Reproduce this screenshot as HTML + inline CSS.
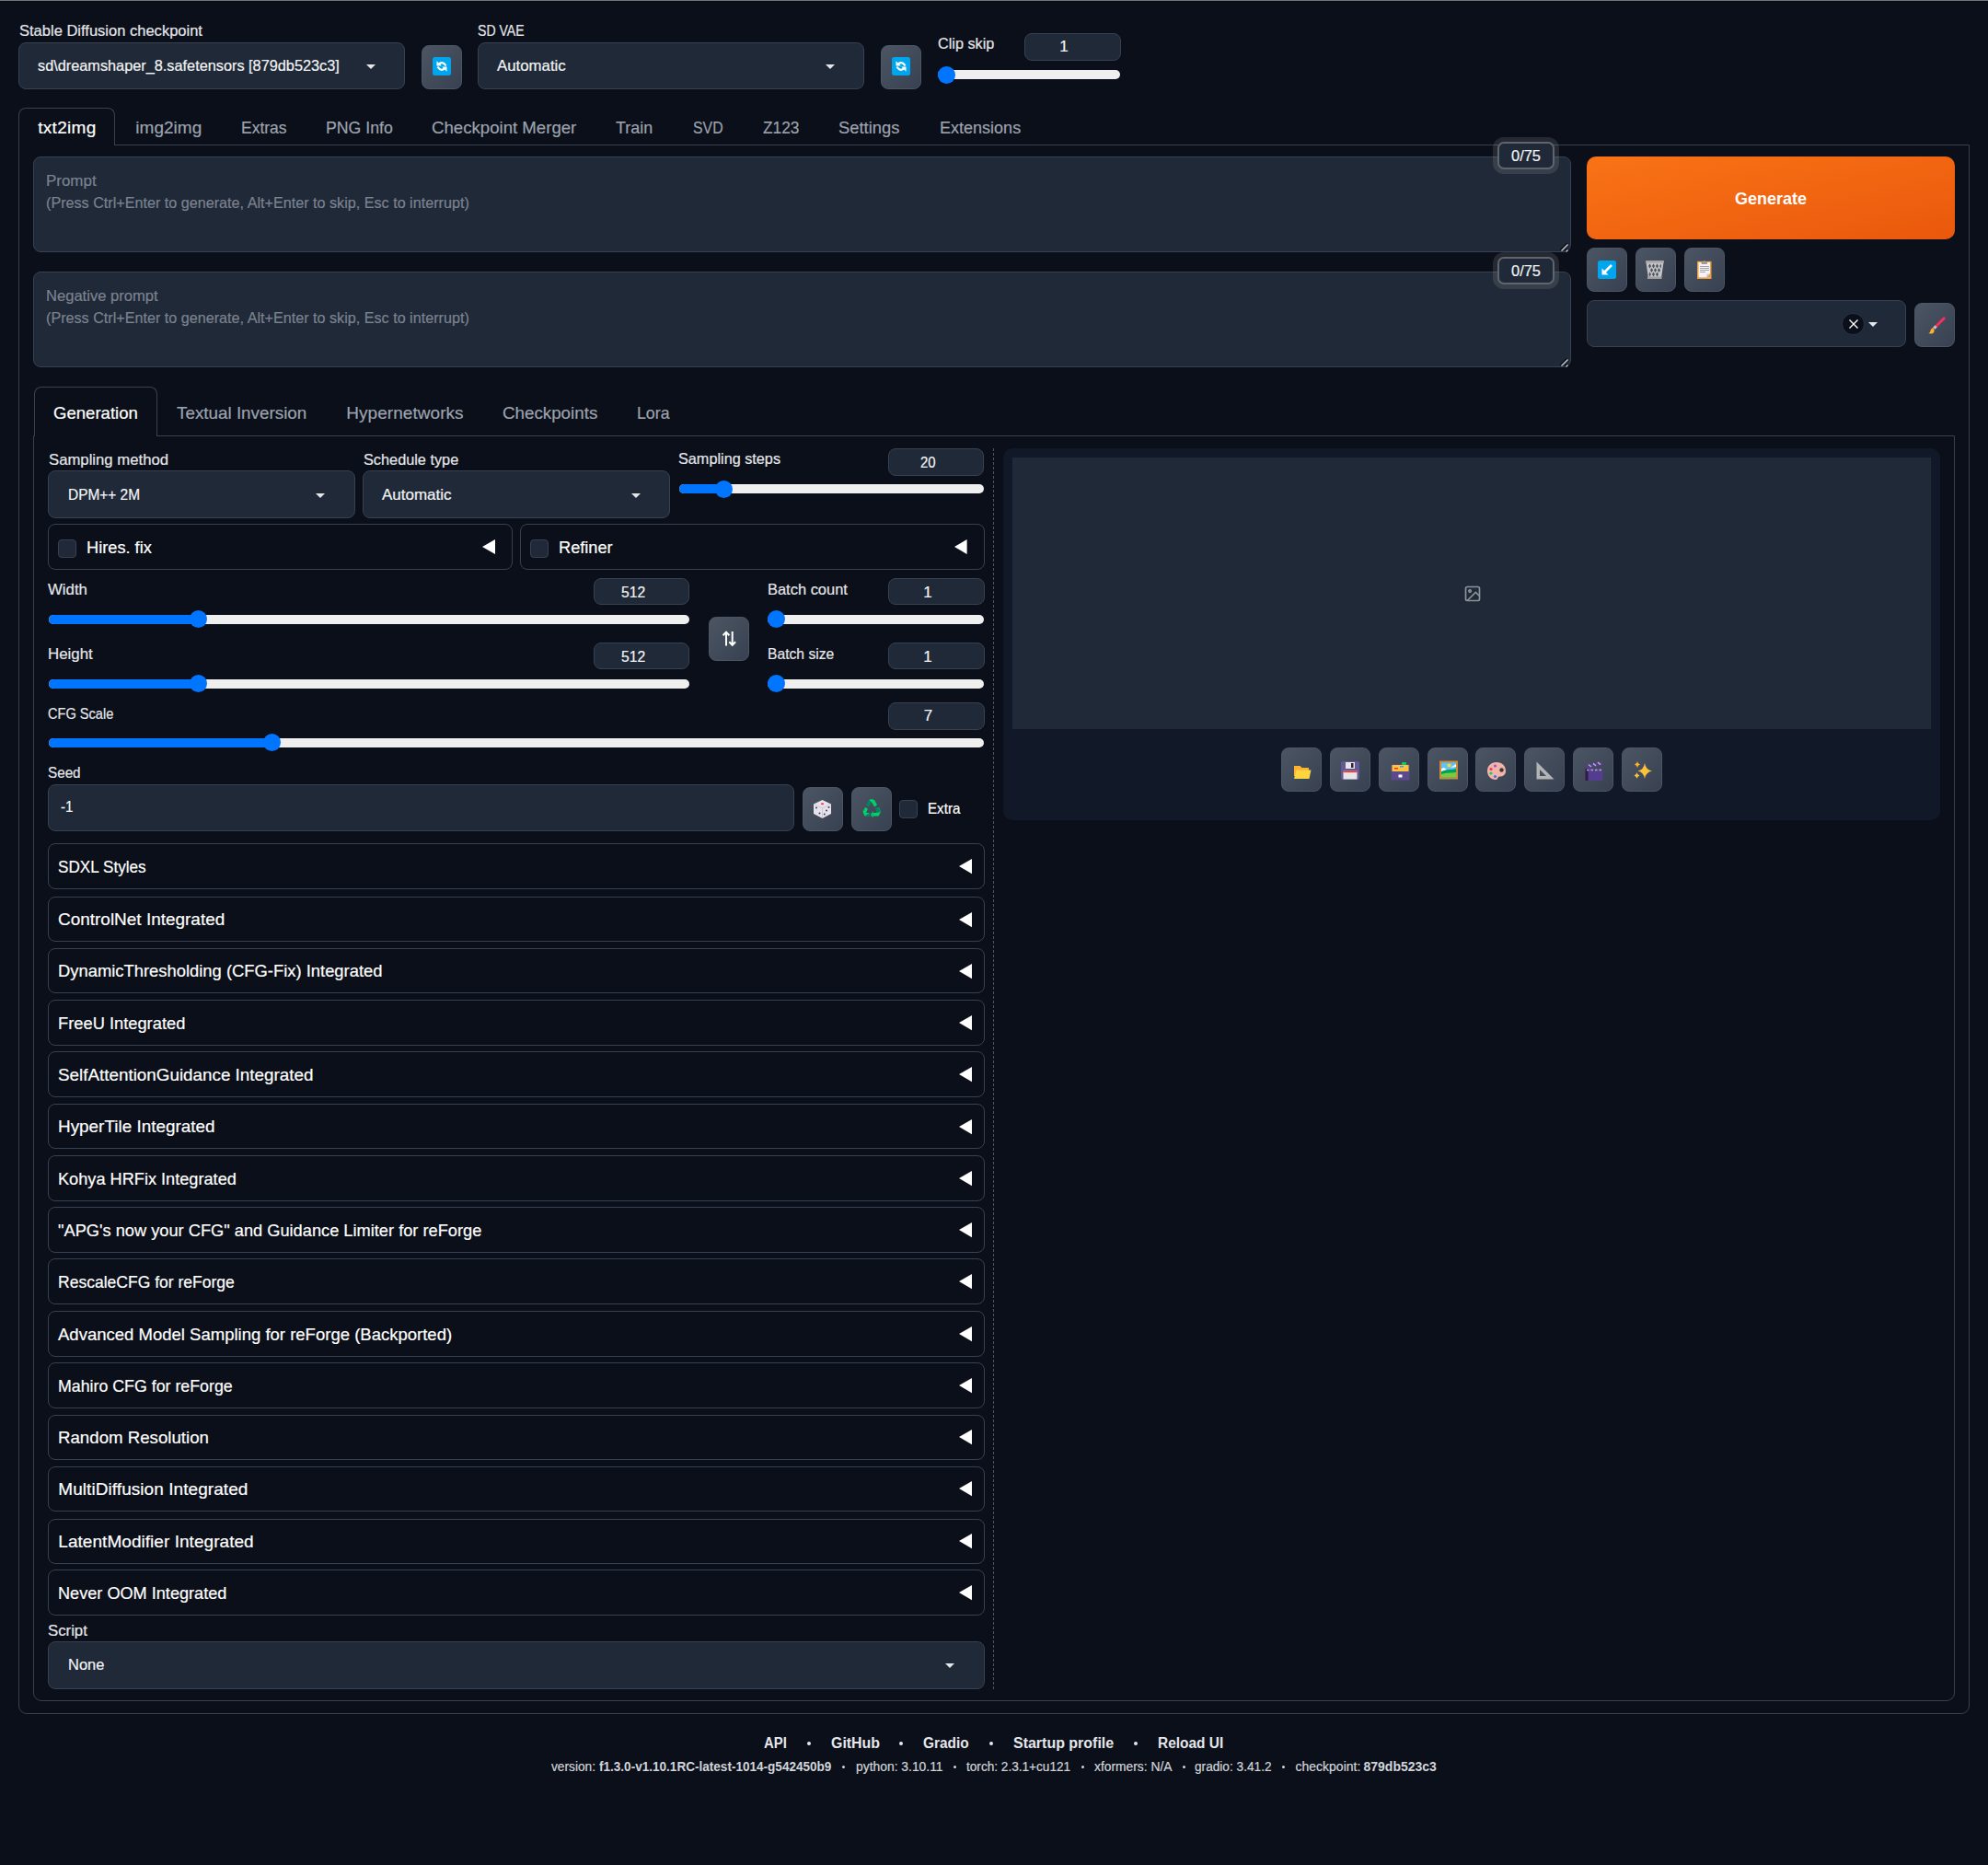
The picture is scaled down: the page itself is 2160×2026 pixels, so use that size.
<!DOCTYPE html>
<html><head><meta charset="utf-8"><style>
html,body{margin:0;padding:0;background:#0b0f19;width:2160px;height:2026px;}
body{position:relative;font-family:"Liberation Sans",sans-serif;}
.a{position:absolute;box-sizing:border-box;}
.t{white-space:pre;-webkit-text-stroke-width:0.2px;}
.btn{background:linear-gradient(to bottom right,#4b5563,#374151);border-radius:8px;border:1px solid #4b5563;}
svg.a{overflow:visible}
</style></head><body>
<div class="a" style="left:0px;top:0px;width:2160px;height:1px;background:#76767a;"></div>
<div class="a" style="left:0px;top:1px;width:2160px;height:1px;background:#070a12;"></div>
<div class="a t" style="left:20.60px;top:25.01px;font-size:17px;line-height:17px;color:#e5e7eb;transform:scaleX(0.9717);transform-origin:0 0;">Stable Diffusion checkpoint</div>
<div class="a" style="left:20px;top:46px;width:420px;height:51px;background:#1f2937;border:1px solid #374151;border-radius:8px;"></div>
<div class="a t" style="left:40.90px;top:62.71px;font-size:17px;line-height:17px;color:#f3f4f6;transform:scaleX(0.9582);transform-origin:0 0;">sd\dreamshaper_8.safetensors [879db523c3]</div>
<svg class="a" style="left:397.7px;top:69.5px" width="10" height="5" viewBox="0 0 10 5"><path d="M0 0H10L5.0 5Z" fill="#e5e7eb"/></svg>
<div class="a btn" style="left:458px;top:49px;width:44px;height:48px"><div class="a" style="left:-1px;top:-1px"><svg class="a" style="left:11.5px;top:13px" width="20" height="20" viewBox="0 0 20 20"><rect width="20" height="20" rx="2.5" fill="#00a6ed"/><path d="M6.6 8.2Q10.2 3.6 14.6 9.4" stroke="#fff" stroke-width="2.2" fill="none"/><path d="M4.5 4.2V9.4H9.7Z" fill="#fff"/><path d="M13.4 11.8Q9.8 16.4 5.4 10.6" stroke="#fff" stroke-width="2.2" fill="none"/><path d="M15.5 15.8V10.6H10.3Z" fill="#fff"/></svg></div></div>
<div class="a t" style="left:519.40px;top:24.71px;font-size:17px;line-height:17px;color:#e5e7eb;transform:scaleX(0.8282);transform-origin:0 0;">SD VAE</div>
<div class="a" style="left:519px;top:46px;width:420px;height:51px;background:#1f2937;border:1px solid #374151;border-radius:8px;"></div>
<div class="a t" style="left:540.30px;top:62.71px;font-size:17px;line-height:17px;color:#f3f4f6;transform:scaleX(0.9881);transform-origin:0 0;">Automatic</div>
<svg class="a" style="left:897.0px;top:69.5px" width="10" height="5" viewBox="0 0 10 5"><path d="M0 0H10L5.0 5Z" fill="#e5e7eb"/></svg>
<div class="a btn" style="left:957px;top:49px;width:44px;height:48px"><div class="a" style="left:-1px;top:-1px"><svg class="a" style="left:11.5px;top:13px" width="20" height="20" viewBox="0 0 20 20"><rect width="20" height="20" rx="2.5" fill="#00a6ed"/><path d="M6.6 8.2Q10.2 3.6 14.6 9.4" stroke="#fff" stroke-width="2.2" fill="none"/><path d="M4.5 4.2V9.4H9.7Z" fill="#fff"/><path d="M13.4 11.8Q9.8 16.4 5.4 10.6" stroke="#fff" stroke-width="2.2" fill="none"/><path d="M15.5 15.8V10.6H10.3Z" fill="#fff"/></svg></div></div>
<div class="a t" style="left:1018.60px;top:39.41px;font-size:17px;line-height:17px;color:#e5e7eb;transform:scaleX(0.9533);transform-origin:0 0;">Clip skip</div>
<div class="a" style="left:1113px;top:36px;width:105px;height:30px;background:#1f2937;border:1px solid #374151;border-radius:8px;"></div>
<div class="a t" style="left:1151.25px;top:42.21px;font-size:17px;line-height:17px;color:#f3f4f6;">1</div>
<div class="a" style="left:1018.6px;top:76.0px;width:198.39999999999998px;height:10px;background:#efefef;border-radius:5.0px;"></div>
<div class="a" style="left:1018.6px;top:76.0px;width:9.399999999999977px;height:10px;background:#0075ff;border-radius:5.0px;"></div>
<div class="a" style="left:1018.5px;top:71.5px;width:19px;height:19px;background:#0075ff;border-radius:9.5px;"></div>
<div class="a" style="left:20px;top:157px;width:2120px;height:1705px;border:1px solid #374151;border-radius:0 0 9px 9px;"></div>
<div class="a" style="left:20px;top:117px;width:105px;height:41px;background:#0b0f19;border:1px solid #374151;border-bottom:none;border-radius:8px 8px 0 0;"></div>
<div class="a t" style="left:41.20px;top:128.82px;font-size:19px;line-height:19px;color:#ffffff;letter-spacing:0.300px;">txt2img</div>
<div class="a t" style="left:147.30px;top:128.82px;font-size:19px;line-height:19px;color:#9ca3af;letter-spacing:0.033px;">img2img</div>
<div class="a t" style="left:262.00px;top:128.82px;font-size:19px;line-height:19px;color:#9ca3af;transform:scaleX(0.9201);transform-origin:0 0;">Extras</div>
<div class="a t" style="left:353.70px;top:128.82px;font-size:19px;line-height:19px;color:#9ca3af;transform:scaleX(0.9321);transform-origin:0 0;">PNG Info</div>
<div class="a t" style="left:468.80px;top:128.82px;font-size:19px;line-height:19px;color:#9ca3af;transform:scaleX(0.9801);transform-origin:0 0;">Checkpoint Merger</div>
<div class="a t" style="left:669.20px;top:128.82px;font-size:19px;line-height:19px;color:#9ca3af;transform:scaleX(0.9437);transform-origin:0 0;">Train</div>
<div class="a t" style="left:752.90px;top:128.82px;font-size:19px;line-height:19px;color:#9ca3af;transform:scaleX(0.8338);transform-origin:0 0;">SVD</div>
<div class="a t" style="left:828.50px;top:128.82px;font-size:19px;line-height:19px;color:#9ca3af;transform:scaleX(0.9122);transform-origin:0 0;">Z123</div>
<div class="a t" style="left:911.40px;top:128.82px;font-size:19px;line-height:19px;color:#9ca3af;transform:scaleX(0.9665);transform-origin:0 0;">Settings</div>
<div class="a t" style="left:1020.90px;top:128.82px;font-size:19px;line-height:19px;color:#9ca3af;transform:scaleX(0.9483);transform-origin:0 0;">Extensions</div>
<div class="a" style="left:36px;top:170px;width:1671px;height:104.4px;background:#1f2937;border:1px solid #374151;border-radius:8px;"></div>
<div class="a t" style="left:50.10px;top:187.81px;font-size:17px;line-height:17px;color:#7b8290;transform:scaleX(0.9964);transform-origin:0 0;">Prompt</div>
<div class="a t" style="left:50.10px;top:212.11px;font-size:17px;line-height:17px;color:#7b8290;transform:scaleX(0.9504);transform-origin:0 0;">(Press Ctrl+Enter to generate, Alt+Enter to skip, Esc to interrupt)</div>
<svg class="a" style="left:1695px;top:263.9px" width="10" height="10" viewBox="0 0 10 10"><path d="M0.5 7.5L7.5 0.5M5.5 8.5L7.5 6.5" stroke="#000" stroke-width="1.3"/><path d="M1.5 8.5L8.5 1.5M6.5 9.5L8.5 7.5" stroke="#c0c4cc" stroke-width="1.5"/></svg>
<div class="a" style="left:36px;top:295.3px;width:1671px;height:104.1px;background:#1f2937;border:1px solid #374151;border-radius:8px;"></div>
<div class="a t" style="left:50.10px;top:313.11px;font-size:17px;line-height:17px;color:#7b8290;transform:scaleX(0.9743);transform-origin:0 0;">Negative prompt</div>
<div class="a t" style="left:50.10px;top:337.41px;font-size:17px;line-height:17px;color:#7b8290;transform:scaleX(0.9504);transform-origin:0 0;">(Press Ctrl+Enter to generate, Alt+Enter to skip, Esc to interrupt)</div>
<svg class="a" style="left:1695px;top:388.9px" width="10" height="10" viewBox="0 0 10 10"><path d="M0.5 7.5L7.5 0.5M5.5 8.5L7.5 6.5" stroke="#000" stroke-width="1.3"/><path d="M1.5 8.5L8.5 1.5M6.5 9.5L8.5 7.5" stroke="#c0c4cc" stroke-width="1.5"/></svg>
<div class="a" style="left:1627px;top:154.3px;width:62px;height:29.5px;border:2px solid rgba(192,192,192,0.4);border-radius:7px;background:#1f2937;box-shadow:0 0 0 5px rgba(192,192,192,0.15)"></div>
<div class="a t" style="left:1641.70px;top:160.91px;font-size:17px;line-height:17px;color:#f3f4f6;transform:scaleX(0.9668);transform-origin:0 0;">0/75</div>
<div class="a" style="left:1627px;top:279.3px;width:62px;height:29.5px;border:2px solid rgba(192,192,192,0.4);border-radius:7px;background:#1f2937;box-shadow:0 0 0 5px rgba(192,192,192,0.15)"></div>
<div class="a t" style="left:1641.70px;top:285.91px;font-size:17px;line-height:17px;color:#f3f4f6;transform:scaleX(0.9668);transform-origin:0 0;">0/75</div>
<div class="a" style="left:1724px;top:170px;width:400px;height:90px;border-radius:10px;background:linear-gradient(to bottom right,#f97316,#ea580c)"></div>
<div class="a t" style="left:1884.90px;top:206.12px;font-size:19px;line-height:19px;color:#ffffff;font-weight:bold;-webkit-text-stroke-width:0;transform:scaleX(0.9466);transform-origin:0 0;">Generate</div>
<div class="a btn" style="left:1724px;top:269px;width:44px;height:48px"><div class="a" style="left:-1px;top:-1px"><svg class="a" style="left:12px;top:14px" width="20" height="20" viewBox="0 0 20 20"><rect width="20" height="20" rx="2.5" fill="#00a6ed"/><path d="M15 5L7 13" stroke="#fff" stroke-width="2.6"/><path d="M4.5 8.5V15.5H11.5Z" fill="#fff"/></svg></div></div>
<div class="a btn" style="left:1777px;top:269px;width:44px;height:48px"><div class="a" style="left:-1px;top:-1px"><svg class="a" style="left:11px;top:14px" width="20" height="20" viewBox="0 0 20 20"><path d="M0.5 2H19.5L17 19.5H3Z" fill="#c4c4c4"/><rect x="0" y="0" width="20" height="2.6" rx="0.6" fill="#a6a6a6"/><rect x="2" y="17.5" width="15.5" height="2.5" fill="#a0a0a0"/><g fill="#4a5260"><path d="M4.5 3.5L6 6L4.5 8.5L3 6Z"/><path d="M8.5 3.5L10 6L8.5 8.5L7 6Z"/><path d="M12.5 3.5L14 6L12.5 8.5L11 6Z"/><path d="M16.3 3.5L17.2 6L16.3 8.5L15.3 6Z"/><path d="M6.5 8L8 10.5L6.5 13L5 10.5Z"/><path d="M10.5 8L12 10.5L10.5 13L9 10.5Z"/><path d="M14.5 8L16 10.5L14.5 13L13 10.5Z"/><path d="M4.5 12.5L6 15L4.5 17.5L3.5 15Z"/><path d="M8.5 12.5L10 15L8.5 17.5L7 15Z"/><path d="M12.5 12.5L14 15L12.5 17.5L11 15Z"/></g></svg></div></div>
<div class="a btn" style="left:1830px;top:269px;width:44px;height:48px"><div class="a" style="left:-1px;top:-1px"><svg class="a" style="left:14px;top:14px" width="16" height="20" viewBox="0 0 16 20"><rect x="0" y="0.8" width="15.5" height="19.2" fill="#eba03e"/><rect x="1.5" y="2" width="12.5" height="16.3" fill="#f4f1f8"/><path d="M14 14.3V18.3H10Z" fill="#eba03e"/><path d="M10 18.3L14 14.3L10.5 14.8Z" fill="#c9c3e0"/><rect x="4.5" y="1.2" width="6.5" height="2.8" rx="0.8" fill="#9a9a9a"/><circle cx="7.75" cy="1.2" r="0.9" fill="#eba03e"/><path d="M3 6.5H13M3 8.5H13M3 10.5H13M3 12.5H9" stroke="#a4a4a4" stroke-width="1"/></svg></div></div>
<div class="a" style="left:1724px;top:326.4px;width:347px;height:50.6px;background:#1f2937;border:1px solid #374151;border-radius:8px;"></div>
<div class="a" style="left:2001.3px;top:339.6px;width:24.5px;height:24.5px;border-radius:12.25px;background:#0b0f19;border:1px solid #2b3544"></div>
<svg class="a" style="left:2007.5px;top:346px" width="12" height="12" viewBox="0 0 12 12"><path d="M1.5 1.5L10.5 10.5M10.5 1.5L1.5 10.5" stroke="#fff" stroke-width="1.4"/></svg>
<svg class="a" style="left:2030.4px;top:349.5px" width="10" height="5" viewBox="0 0 10 5"><path d="M0 0H10L5.0 5Z" fill="#e5e7eb"/></svg>
<div class="a btn" style="left:2080px;top:329.3px;width:44px;height:47.7px"><div class="a" style="left:-1px;top:-1px"><svg class="a" style="left:13.5px;top:15px" width="20" height="20" viewBox="0 0 22 22"><path d="M20 2L10 12" stroke="#f92f60" stroke-width="3.2" stroke-linecap="round"/><path d="M10.5 11.5L8 14" stroke="#c4c4c4" stroke-width="3.4"/><path d="M7.5 13.5C5 13.5 4 15.5 3.5 18C3 19.5 2 19.5 1.5 19.5C3 21 7.5 21 8.5 17Z" fill="#ffb02e"/></svg></div></div>
<div class="a" style="left:36px;top:473px;width:2088px;height:1375px;border:1px solid #374151;border-radius:0 0 9px 9px;"></div>
<div class="a" style="left:36.5px;top:420px;width:134px;height:54px;background:#0b0f19;border:1px solid #374151;border-bottom:none;border-radius:8px 8px 0 0;"></div>
<div class="a t" style="left:57.60px;top:438.52px;font-size:19px;line-height:19px;color:#ffffff;transform:scaleX(0.9766);transform-origin:0 0;">Generation</div>
<div class="a t" style="left:192.00px;top:438.52px;font-size:19px;line-height:19px;color:#9ca3af;transform:scaleX(0.9909);transform-origin:0 0;">Textual Inversion</div>
<div class="a t" style="left:376.20px;top:438.52px;font-size:19px;line-height:19px;color:#9ca3af;letter-spacing:0.058px;">Hypernetworks</div>
<div class="a t" style="left:546.10px;top:438.52px;font-size:19px;line-height:19px;color:#9ca3af;transform:scaleX(0.9876);transform-origin:0 0;">Checkpoints</div>
<div class="a t" style="left:692.20px;top:438.52px;font-size:19px;line-height:19px;color:#9ca3af;transform:scaleX(0.9344);transform-origin:0 0;">Lora</div>
<div class="a t" style="left:52.50px;top:490.81px;font-size:17px;line-height:17px;color:#e5e7eb;transform:scaleX(0.9826);transform-origin:0 0;">Sampling method</div>
<div class="a" style="left:52px;top:511.2px;width:334px;height:51.5px;background:#1f2937;border:1px solid #374151;border-radius:8px;"></div>
<div class="a t" style="left:73.60px;top:529.01px;font-size:17px;line-height:17px;color:#f3f4f6;transform:scaleX(0.9070);transform-origin:0 0;">DPM++ 2M</div>
<svg class="a" style="left:343.4px;top:535.8px" width="10" height="5" viewBox="0 0 10 5"><path d="M0 0H10L5.0 5Z" fill="#e5e7eb"/></svg>
<div class="a t" style="left:394.90px;top:490.81px;font-size:17px;line-height:17px;color:#e5e7eb;transform:scaleX(0.9582);transform-origin:0 0;">Schedule type</div>
<div class="a" style="left:394.3px;top:511.2px;width:333.5px;height:51.5px;background:#1f2937;border:1px solid #374151;border-radius:8px;"></div>
<div class="a t" style="left:415.40px;top:529.01px;font-size:17px;line-height:17px;color:#f3f4f6;transform:scaleX(0.9987);transform-origin:0 0;">Automatic</div>
<svg class="a" style="left:685.6px;top:535.8px" width="10" height="5" viewBox="0 0 10 5"><path d="M0 0H10L5.0 5Z" fill="#e5e7eb"/></svg>
<div class="a t" style="left:736.70px;top:490.41px;font-size:17px;line-height:17px;color:#e5e7eb;transform:scaleX(0.9552);transform-origin:0 0;">Sampling steps</div>
<div class="a" style="left:965.4px;top:487.2px;width:104px;height:29.6px;background:#1f2937;border:1px solid #374151;border-radius:8px;"></div>
<div class="a t" style="left:999.80px;top:493.61px;font-size:17px;line-height:17px;color:#f3f4f6;transform:scaleX(0.8783);transform-origin:0 0;">20</div>
<div class="a" style="left:738px;top:526.0px;width:330.5999999999999px;height:10px;background:#efefef;border-radius:5.0px;"></div>
<div class="a" style="left:738px;top:526.0px;width:48.10000000000002px;height:10px;background:#0075ff;border-radius:5.0px;"></div>
<div class="a" style="left:776.6px;top:521.5px;width:19px;height:19px;background:#0075ff;border-radius:9.5px;"></div>
<div class="a" style="left:52px;top:569.1px;width:505px;height:49.6px;border:1px solid #374151;border-radius:8px;"></div>
<div class="a" style="left:63.1px;top:586.2px;width:20px;height:20px;background:#1f2937;border:1px solid #374151;border-radius:4px;"></div>
<div class="a t" style="left:93.90px;top:585.02px;font-size:19px;line-height:19px;color:#ffffff;transform:scaleX(0.9581);transform-origin:0 0;">Hires. fix</div>
<svg class="a" style="left:523.7px;top:586px" width="14.0" height="16" viewBox="0 0 14.0 16"><path d="M14.0 0V16L0 8.0Z" fill="#fff"/></svg>
<div class="a" style="left:565px;top:569.3px;width:505px;height:49.3px;border:1px solid #374151;border-radius:8px;"></div>
<div class="a" style="left:575.9px;top:586.2px;width:20px;height:20px;background:#1f2937;border:1px solid #374151;border-radius:4px;"></div>
<div class="a t" style="left:607.40px;top:585.02px;font-size:19px;line-height:19px;color:#ffffff;transform:scaleX(0.9576);transform-origin:0 0;">Refiner</div>
<svg class="a" style="left:1036.9px;top:586px" width="13.599999999999909" height="16" viewBox="0 0 13.599999999999909 16"><path d="M13.599999999999909 0V16L0 8.0Z" fill="#fff"/></svg>
<div class="a t" style="left:52.10px;top:632.01px;font-size:17px;line-height:17px;color:#e5e7eb;transform:scaleX(0.9885);transform-origin:0 0;">Width</div>
<div class="a" style="left:645.2px;top:628.4px;width:104.3px;height:29px;background:#1f2937;border:1px solid #374151;border-radius:8px;"></div>
<div class="a t" style="left:674.60px;top:634.61px;font-size:17px;line-height:17px;color:#f3f4f6;transform:scaleX(0.9225);transform-origin:0 0;">512</div>
<div class="a" style="left:52.8px;top:667.8px;width:696.0px;height:10px;background:#efefef;border-radius:5.0px;"></div>
<div class="a" style="left:52.8px;top:667.8px;width:162.2px;height:10px;background:#0075ff;border-radius:5.0px;"></div>
<div class="a" style="left:205.5px;top:663.3px;width:19px;height:19px;background:#0075ff;border-radius:9.5px;"></div>
<div class="a t" style="left:52.10px;top:701.91px;font-size:17px;line-height:17px;color:#e5e7eb;transform:scaleX(0.9919);transform-origin:0 0;">Height</div>
<div class="a" style="left:645.2px;top:698.1px;width:104.3px;height:29.4px;background:#1f2937;border:1px solid #374151;border-radius:8px;"></div>
<div class="a t" style="left:674.60px;top:704.71px;font-size:17px;line-height:17px;color:#f3f4f6;transform:scaleX(0.9225);transform-origin:0 0;">512</div>
<div class="a btn" style="left:770px;top:670.2px;width:44px;height:47.6px"><div class="a" style="left:-1px;top:-1px"><svg class="a" style="left:11px;top:13px" width="22" height="22" viewBox="0 0 22 22"><path d="M8 18.4V4M4.6 7.2L8 3.6L11.4 7.2" stroke="#fff" stroke-width="2" fill="none"/><path d="M14.7 3.1V17.5M11.3 14.3L14.7 17.9L18.1 14.3" stroke="#fff" stroke-width="2" fill="none"/></svg></div></div>
<div class="a t" style="left:834.40px;top:632.31px;font-size:17px;line-height:17px;color:#e5e7eb;transform:scaleX(0.9677);transform-origin:0 0;">Batch count</div>
<div class="a" style="left:965px;top:628.4px;width:105px;height:29px;background:#1f2937;border:1px solid #374151;border-radius:8px;"></div>
<div class="a t" style="left:1003.25px;top:634.61px;font-size:17px;line-height:17px;color:#f3f4f6;">1</div>
<div class="a" style="left:834.4px;top:667.7px;width:234.60000000000002px;height:10px;background:#efefef;border-radius:5.0px;"></div>
<div class="a" style="left:834.4px;top:667.7px;width:9.5px;height:10px;background:#0075ff;border-radius:5.0px;"></div>
<div class="a" style="left:834.4px;top:663.2px;width:19px;height:19px;background:#0075ff;border-radius:9.5px;"></div>
<div class="a t" style="left:834.40px;top:701.81px;font-size:17px;line-height:17px;color:#e5e7eb;transform:scaleX(0.9209);transform-origin:0 0;">Batch size</div>
<div class="a" style="left:965px;top:698.1px;width:105px;height:29.4px;background:#1f2937;border:1px solid #374151;border-radius:8px;"></div>
<div class="a t" style="left:1003.25px;top:704.71px;font-size:17px;line-height:17px;color:#f3f4f6;">1</div>
<div class="a" style="left:834.4px;top:737.7px;width:234.60000000000002px;height:10px;background:#efefef;border-radius:5.0px;"></div>
<div class="a" style="left:834.4px;top:737.7px;width:9.5px;height:10px;background:#0075ff;border-radius:5.0px;"></div>
<div class="a" style="left:834.4px;top:733.2px;width:19px;height:19px;background:#0075ff;border-radius:9.5px;"></div>
<div class="a" style="left:52.8px;top:737.7px;width:696.0px;height:10px;background:#efefef;border-radius:5.0px;"></div>
<div class="a" style="left:52.8px;top:737.7px;width:162.2px;height:10px;background:#0075ff;border-radius:5.0px;"></div>
<div class="a" style="left:205.5px;top:733.2px;width:19px;height:19px;background:#0075ff;border-radius:9.5px;"></div>
<div class="a t" style="left:52.40px;top:766.81px;font-size:17px;line-height:17px;color:#e5e7eb;transform:scaleX(0.8580);transform-origin:0 0;">CFG Scale</div>
<div class="a" style="left:965px;top:763px;width:105px;height:30px;background:#1f2937;border:1px solid #374151;border-radius:8px;"></div>
<div class="a t" style="left:1003.65px;top:769.41px;font-size:17px;line-height:17px;color:#f3f4f6;">7</div>
<div class="a" style="left:52.8px;top:801.8px;width:1016.2px;height:10px;background:#efefef;border-radius:5.0px;"></div>
<div class="a" style="left:52.8px;top:801.8px;width:242.2px;height:10px;background:#0075ff;border-radius:5.0px;"></div>
<div class="a" style="left:285.5px;top:797.3px;width:19px;height:19px;background:#0075ff;border-radius:9.5px;"></div>
<div class="a t" style="left:52.40px;top:830.61px;font-size:17px;line-height:17px;color:#e5e7eb;transform:scaleX(0.8967);transform-origin:0 0;">Seed</div>
<div class="a" style="left:52px;top:852.2px;width:811px;height:50.5px;background:#1f2937;border:1px solid #374151;border-radius:8px;"></div>
<div class="a t" style="left:65.70px;top:868.41px;font-size:17px;line-height:17px;color:#f3f4f6;transform:scaleX(0.8940);transform-origin:0 0;">-1</div>
<div class="a btn" style="left:872px;top:855px;width:44px;height:47.7px"><div class="a" style="left:-1px;top:-1px"><svg class="a" style="left:11px;top:13px" width="21" height="22" viewBox="0 0 21 22"><path d="M10.5 1L20 5.5V16L10.5 21L1 16V5.5Z" fill="#e8e2ec"/><path d="M1 5.5L10.5 10L20 5.5M10.5 10V21" stroke="#c9c0cf" stroke-width="0.8" fill="none"/><ellipse cx="10.5" cy="5.3" rx="1.6" ry="1" fill="#f8312f"/><circle cx="4" cy="9.5" r="1" fill="#433b6b"/><circle cx="7.5" cy="15.5" r="1" fill="#433b6b"/><circle cx="17.5" cy="9" r="1" fill="#433b6b"/><circle cx="15" cy="12.5" r="1" fill="#433b6b"/><circle cx="12.8" cy="16.5" r="1" fill="#433b6b"/></svg></div></div>
<div class="a btn" style="left:925px;top:855px;width:44px;height:47.7px"><div class="a" style="left:-1px;top:-1px"><svg class="a" style="left:11px;top:12px" width="22" height="22" viewBox="0 0 22 22"><path d="M8 2L11 1L14 2L17 7.5L14 9.5L11.5 5Z" fill="#00d26a"/><path d="M8 2L5 8L8 9.5L11 4.5Z" fill="#008463"/><path d="M4 10L1.5 15L3.5 19.5L9 19.5V16L5 16L7 11.5Z" fill="#00d26a"/><path d="M3.5 19.5L9.5 20L9 16Z" fill="#008463"/><path d="M19 10L21 15L18.5 19.5H12.5L12.5 16H17L15.5 11.5Z" fill="#00d26a"/><path d="M15 10.5L18 9.5L21 15L17 16Z" fill="#008463"/><path d="M12.5 14L10 18L12.5 21.5Z" fill="#00d26a"/></svg></div></div>
<div class="a" style="left:977px;top:869px;width:20px;height:20px;background:#1f2937;border:1px solid #374151;border-radius:4px;"></div>
<div class="a t" style="left:1007.80px;top:869.61px;font-size:17px;line-height:17px;color:#ffffff;transform:scaleX(0.8917);transform-origin:0 0;">Extra</div>
<div class="a" style="left:52px;top:916.4px;width:1018px;height:49.3px;border:1px solid #374151;border-radius:8px;"></div>
<div class="a t" style="left:63.30px;top:931.62px;font-size:19px;line-height:19px;color:#ffffff;transform:scaleX(0.9028);transform-origin:0 0;">SDXL Styles</div>
<svg class="a" style="left:1042px;top:932.9px" width="14" height="16.200000000000045" viewBox="0 0 14 16.200000000000045"><path d="M14 0V16.200000000000045L0 8.100000000000023Z" fill="#fff"/></svg>
<div class="a" style="left:52px;top:974.1px;width:1018px;height:49.3px;border:1px solid #374151;border-radius:8px;"></div>
<div class="a t" style="left:63.30px;top:989.32px;font-size:19px;line-height:19px;color:#ffffff;transform:scaleX(0.9978);transform-origin:0 0;">ControlNet Integrated</div>
<svg class="a" style="left:1042px;top:990.6px" width="14" height="16.200000000000045" viewBox="0 0 14 16.200000000000045"><path d="M14 0V16.200000000000045L0 8.100000000000023Z" fill="#fff"/></svg>
<div class="a" style="left:52px;top:1030.1px;width:1018px;height:49.3px;border:1px solid #374151;border-radius:8px;"></div>
<div class="a t" style="left:63.30px;top:1045.32px;font-size:19px;line-height:19px;color:#ffffff;transform:scaleX(0.9676);transform-origin:0 0;">DynamicThresholding (CFG-Fix) Integrated</div>
<svg class="a" style="left:1042px;top:1046.6px" width="14" height="16.200000000000045" viewBox="0 0 14 16.200000000000045"><path d="M14 0V16.200000000000045L0 8.100000000000023Z" fill="#fff"/></svg>
<div class="a" style="left:52px;top:1086.3px;width:1018px;height:49.3px;border:1px solid #374151;border-radius:8px;"></div>
<div class="a t" style="left:63.30px;top:1101.52px;font-size:19px;line-height:19px;color:#ffffff;transform:scaleX(0.9631);transform-origin:0 0;">FreeU Integrated</div>
<svg class="a" style="left:1042px;top:1102.8px" width="14" height="16.200000000000045" viewBox="0 0 14 16.200000000000045"><path d="M14 0V16.200000000000045L0 8.100000000000023Z" fill="#fff"/></svg>
<div class="a" style="left:52px;top:1142.4px;width:1018px;height:49.3px;border:1px solid #374151;border-radius:8px;"></div>
<div class="a t" style="left:63.30px;top:1157.62px;font-size:19px;line-height:19px;color:#ffffff;transform:scaleX(0.9911);transform-origin:0 0;">SelfAttentionGuidance Integrated</div>
<svg class="a" style="left:1042px;top:1158.9px" width="14" height="16.200000000000045" viewBox="0 0 14 16.200000000000045"><path d="M14 0V16.200000000000045L0 8.100000000000023Z" fill="#fff"/></svg>
<div class="a" style="left:52px;top:1199.2px;width:1018px;height:49.3px;border:1px solid #374151;border-radius:8px;"></div>
<div class="a t" style="left:63.30px;top:1214.42px;font-size:19px;line-height:19px;color:#ffffff;transform:scaleX(0.9947);transform-origin:0 0;">HyperTile Integrated</div>
<svg class="a" style="left:1042px;top:1215.7px" width="14" height="16.200000000000045" viewBox="0 0 14 16.200000000000045"><path d="M14 0V16.200000000000045L0 8.100000000000023Z" fill="#fff"/></svg>
<div class="a" style="left:52px;top:1255.4px;width:1018px;height:49.3px;border:1px solid #374151;border-radius:8px;"></div>
<div class="a t" style="left:63.30px;top:1270.62px;font-size:19px;line-height:19px;color:#ffffff;transform:scaleX(0.9561);transform-origin:0 0;">Kohya HRFix Integrated</div>
<svg class="a" style="left:1042px;top:1271.9px" width="14" height="16.200000000000045" viewBox="0 0 14 16.200000000000045"><path d="M14 0V16.200000000000045L0 8.100000000000023Z" fill="#fff"/></svg>
<div class="a" style="left:52px;top:1311.3px;width:1018px;height:49.3px;border:1px solid #374151;border-radius:8px;"></div>
<div class="a t" style="left:63.30px;top:1326.52px;font-size:19px;line-height:19px;color:#ffffff;transform:scaleX(0.9598);transform-origin:0 0;">"APG's now your CFG" and Guidance Limiter for reForge</div>
<svg class="a" style="left:1042px;top:1327.8px" width="14" height="16.200000000000045" viewBox="0 0 14 16.200000000000045"><path d="M14 0V16.200000000000045L0 8.100000000000023Z" fill="#fff"/></svg>
<div class="a" style="left:52px;top:1367.3px;width:1018px;height:49.3px;border:1px solid #374151;border-radius:8px;"></div>
<div class="a t" style="left:63.30px;top:1382.52px;font-size:19px;line-height:19px;color:#ffffff;transform:scaleX(0.9221);transform-origin:0 0;">RescaleCFG for reForge</div>
<svg class="a" style="left:1042px;top:1383.8px" width="14" height="16.200000000000045" viewBox="0 0 14 16.200000000000045"><path d="M14 0V16.200000000000045L0 8.100000000000023Z" fill="#fff"/></svg>
<div class="a" style="left:52px;top:1424.3px;width:1018px;height:49.3px;border:1px solid #374151;border-radius:8px;"></div>
<div class="a t" style="left:63.30px;top:1439.52px;font-size:19px;line-height:19px;color:#ffffff;transform:scaleX(0.9745);transform-origin:0 0;">Advanced Model Sampling for reForge (Backported)</div>
<svg class="a" style="left:1042px;top:1440.8px" width="14" height="16.200000000000045" viewBox="0 0 14 16.200000000000045"><path d="M14 0V16.200000000000045L0 8.100000000000023Z" fill="#fff"/></svg>
<div class="a" style="left:52px;top:1480.3px;width:1018px;height:49.3px;border:1px solid #374151;border-radius:8px;"></div>
<div class="a t" style="left:63.30px;top:1495.52px;font-size:19px;line-height:19px;color:#ffffff;transform:scaleX(0.9357);transform-origin:0 0;">Mahiro CFG for reForge</div>
<svg class="a" style="left:1042px;top:1496.8px" width="14" height="16.200000000000045" viewBox="0 0 14 16.200000000000045"><path d="M14 0V16.200000000000045L0 8.100000000000023Z" fill="#fff"/></svg>
<div class="a" style="left:52px;top:1536.5px;width:1018px;height:49.3px;border:1px solid #374151;border-radius:8px;"></div>
<div class="a t" style="left:63.30px;top:1551.72px;font-size:19px;line-height:19px;color:#ffffff;transform:scaleX(0.9826);transform-origin:0 0;">Random Resolution</div>
<svg class="a" style="left:1042px;top:1553.0px" width="14" height="16.200000000000045" viewBox="0 0 14 16.200000000000045"><path d="M14 0V16.200000000000045L0 8.100000000000023Z" fill="#fff"/></svg>
<div class="a" style="left:52px;top:1592.7px;width:1018px;height:49.3px;border:1px solid #374151;border-radius:8px;"></div>
<div class="a t" style="left:63.30px;top:1607.92px;font-size:19px;line-height:19px;color:#ffffff;letter-spacing:0.062px;">MultiDiffusion Integrated</div>
<svg class="a" style="left:1042px;top:1609.2px" width="14" height="16.200000000000045" viewBox="0 0 14 16.200000000000045"><path d="M14 0V16.200000000000045L0 8.100000000000023Z" fill="#fff"/></svg>
<div class="a" style="left:52px;top:1649.6px;width:1018px;height:49.3px;border:1px solid #374151;border-radius:8px;"></div>
<div class="a t" style="left:63.30px;top:1664.82px;font-size:19px;line-height:19px;color:#ffffff;letter-spacing:0.046px;">LatentModifier Integrated</div>
<svg class="a" style="left:1042px;top:1666.1px" width="14" height="16.200000000000045" viewBox="0 0 14 16.200000000000045"><path d="M14 0V16.200000000000045L0 8.100000000000023Z" fill="#fff"/></svg>
<div class="a" style="left:52px;top:1705.4px;width:1018px;height:49.3px;border:1px solid #374151;border-radius:8px;"></div>
<div class="a t" style="left:63.30px;top:1720.62px;font-size:19px;line-height:19px;color:#ffffff;transform:scaleX(0.9542);transform-origin:0 0;">Never OOM Integrated</div>
<svg class="a" style="left:1042px;top:1721.9px" width="14" height="16.200000000000045" viewBox="0 0 14 16.200000000000045"><path d="M14 0V16.200000000000045L0 8.100000000000023Z" fill="#fff"/></svg>
<div class="a t" style="left:52.30px;top:1762.51px;font-size:17px;line-height:17px;color:#e5e7eb;transform:scaleX(0.9862);transform-origin:0 0;">Script</div>
<div class="a" style="left:52px;top:1783.4px;width:1018px;height:51.2px;background:#1f2937;border:1px solid #374151;border-radius:8px;"></div>
<div class="a t" style="left:73.80px;top:1800.41px;font-size:17px;line-height:17px;color:#f3f4f6;transform:scaleX(0.9680);transform-origin:0 0;">None</div>
<svg class="a" style="left:1027.0px;top:1807.2px" width="10" height="5" viewBox="0 0 10 5"><path d="M0 0H10L5.0 5Z" fill="#e5e7eb"/></svg>
<div class="a" style="left:1079px;top:487px;width:1px;height:1348px;background:repeating-linear-gradient(to bottom,#4b5563 0 3px,transparent 3px 5px)"></div>
<div class="a" style="left:1090px;top:487px;width:1018.3px;height:404px;background:#111827;border-radius:10px;"></div>
<div class="a" style="left:1100px;top:497px;width:998px;height:295px;background:#1f2937;"></div>
<svg class="a" style="left:1589.5px;top:634.5px" width="20" height="20" viewBox="0 0 24 24"><rect x="3" y="3" width="18" height="18" rx="2" stroke="#8d939c" stroke-width="2" fill="none"/><circle cx="8.5" cy="8.5" r="1.5" stroke="#8d939c" stroke-width="2" fill="none"/><path d="M21 15L16 10L5 21" stroke="#8d939c" stroke-width="2" fill="none"/></svg>
<div class="a btn" style="left:1392.2px;top:812px;width:44px;height:48px"><div class="a" style="left:-1px;top:-1px"><svg class="a" style="left:12.5px;top:15.5px" width="20" height="20" viewBox="0 0 20 20"><path d="M1 4H7.5L9.5 6H17V15H1Z" fill="#ffb02e"/><path d="M3.5 8.5H19.5L17.5 18H1Z" fill="#fcd53f"/></svg></div></div>
<div class="a btn" style="left:1444.9px;top:812px;width:44px;height:48px"><div class="a" style="left:-1px;top:-1px"><svg class="a" style="left:12.5px;top:14.5px" width="20" height="21" viewBox="0 0 20 21"><rect x="0" y="0" width="20" height="20" rx="2" fill="#635994"/><rect x="5" y="1" width="10" height="7" fill="#e6e6e6"/><rect x="11" y="2" width="2.5" height="5" fill="#321b41"/><rect x="2.5" y="10.5" width="15" height="9" fill="#e6e6e6"/><rect x="2.5" y="10.5" width="15" height="1.6" fill="#f8312f"/></svg></div></div>
<div class="a btn" style="left:1498px;top:812px;width:44px;height:48px"><div class="a" style="left:-1px;top:-1px"><svg class="a" style="left:12.5px;top:14.5px" width="21" height="21" viewBox="0 0 21 21"><rect x="0.5" y="3" width="20" height="17.5" rx="1.5" fill="#5c4a8c"/><rect x="1.5" y="4" width="18" height="7" fill="#ffc43b"/><rect x="12" y="1" width="5" height="3" rx="1" fill="#00d26a"/><rect x="10" y="5" width="4" height="1.5" fill="#3f9bf4"/><rect x="4" y="7" width="4" height="1.5" fill="#f8312f"/><rect x="8.5" y="14.5" width="4" height="3" fill="#fff"/></svg></div></div>
<div class="a btn" style="left:1551px;top:812px;width:44px;height:48px"><div class="a" style="left:-1px;top:-1px"><svg class="a" style="left:12.5px;top:13.5px" width="20" height="22" viewBox="0 0 20 22"><rect x="0" y="0.5" width="20" height="20" fill="#cc8a3a"/><rect x="2" y="2.5" width="16" height="16" fill="#5fc4f5"/><path d="M2 12C6 9 12 11 18 9V18.5H2Z" fill="#00a05a"/><path d="M2 15C7 13 12 14 18 13V18.5H2Z" fill="#7ac943"/><circle cx="10.5" cy="5.5" r="2" fill="#fcd53f"/><path d="M2 9L5 8L8 10L2 12Z M12 8L18 4V7Z" fill="#fff"/></svg></div></div>
<div class="a btn" style="left:1603.1px;top:812px;width:44px;height:48px"><div class="a" style="left:-1px;top:-1px"><svg class="a" style="left:11.5px;top:14.5px" width="22" height="21" viewBox="0 0 22 21"><path d="M11 1C4.5 1 1 5.5 1 10.5C1 16 5 20 10 20C13 20 12 16.5 14.5 16.5C18 16.5 21 14.5 21 10.5C21 5 17 1 11 1Z" fill="#f4b5a8"/><circle cx="16.5" cy="9.5" r="2.2" fill="#3a3a3a"/><circle cx="5" cy="8.5" r="1.6" fill="#f92f60"/><circle cx="9.5" cy="5" r="1.6" fill="#8c5ad9"/><circle cx="5" cy="13" r="1.6" fill="#00d26a"/><circle cx="9.5" cy="16.5" r="1.6" fill="#3f6ef4"/></svg></div></div>
<div class="a btn" style="left:1656.2px;top:812px;width:44px;height:48px"><div class="a" style="left:-1px;top:-1px"><svg class="a" style="left:12.5px;top:14.5px" width="20" height="20" viewBox="0 0 20 20"><path d="M0.5 0.5L19.5 19.5H0.5Z" fill="#b4b4b4"/><path d="M4 9L11 16H4Z" fill="#46505e"/><path d="M3 3L18 18" stroke="#8c80c4" stroke-width="1" stroke-dasharray="1 1.5"/></svg></div></div>
<div class="a btn" style="left:1709.1px;top:812px;width:44px;height:48px"><div class="a" style="left:-1px;top:-1px"><svg class="a" style="left:12.5px;top:14.5px" width="20" height="21" viewBox="0 0 20 21"><rect x="0.5" y="8" width="19" height="13" fill="#533d8f"/><rect x="0.5" y="8" width="3" height="13" fill="#321b41"/><path d="M0.5 4L18.5 0L19.5 4L1.5 8Z" fill="#533d8f"/><path d="M4 3.5L7 6M9 2.3L12 4.8M14 1.2L17 3.7" stroke="#b4acbc" stroke-width="1.5"/><path d="M2 9.5H18" stroke="#b4acbc" stroke-width="1.3" stroke-dasharray="2.5 2"/></svg></div></div>
<div class="a btn" style="left:1762.2px;top:812px;width:44px;height:48px"><div class="a" style="left:-1px;top:-1px"><svg class="a" style="left:11.5px;top:13.5px" width="22" height="22" viewBox="0 0 22 22"><path d="M13 3Q14 10 21 11.5Q14 13 13 20Q12 13 5.5 11.5Q12 10 13 3Z" fill="#f9c23c"/><path d="M5 1Q5.5 4 8 4.5Q5.5 5 5 8Q4.5 5 2 4.5Q4.5 4 5 1Z" fill="#ffb02e"/><path d="M4.5 13Q5 16 7.5 16.5Q5 17 4.5 20Q4 17 1.5 16.5Q4 16 4.5 13Z" fill="#f9c23c"/></svg></div></div>
<div class="a t" style="left:830.10px;top:1886.06px;font-size:16px;line-height:16px;color:#e5e7eb;font-weight:bold;-webkit-text-stroke-width:0;transform:scaleX(0.9288);transform-origin:0 0;">API</div>
<div class="a t" style="left:902.80px;top:1886.06px;font-size:16px;line-height:16px;color:#e5e7eb;font-weight:bold;-webkit-text-stroke-width:0;transform:scaleX(0.9944);transform-origin:0 0;">GitHub</div>
<div class="a t" style="left:1003.40px;top:1886.06px;font-size:16px;line-height:16px;color:#e5e7eb;font-weight:bold;-webkit-text-stroke-width:0;transform:scaleX(0.9612);transform-origin:0 0;">Gradio</div>
<div class="a t" style="left:1100.80px;top:1886.06px;font-size:16px;line-height:16px;color:#e5e7eb;font-weight:bold;-webkit-text-stroke-width:0;transform:scaleX(0.9982);transform-origin:0 0;">Startup profile</div>
<div class="a t" style="left:1257.70px;top:1886.06px;font-size:16px;line-height:16px;color:#e5e7eb;font-weight:bold;-webkit-text-stroke-width:0;transform:scaleX(0.9661);transform-origin:0 0;">Reload UI</div>
<div class="a" style="left:877.4px;top:1891.5px;width:4px;height:4px;background:#e5e7eb;border-radius:2px;"></div>
<div class="a" style="left:977.4px;top:1891.5px;width:4px;height:4px;background:#e5e7eb;border-radius:2px;"></div>
<div class="a" style="left:1074.9px;top:1891.5px;width:4px;height:4px;background:#e5e7eb;border-radius:2px;"></div>
<div class="a" style="left:1231.8px;top:1891.5px;width:4px;height:4px;background:#e5e7eb;border-radius:2px;"></div>
<div class="a t" style="left:599.40px;top:1912.05px;font-size:14px;line-height:14px;color:#d1d5db;transform:scaleX(0.9796);transform-origin:0 0;">version:</div>
<div class="a t" style="left:651.10px;top:1912.05px;font-size:14px;line-height:14px;color:#d1d5db;font-weight:bold;-webkit-text-stroke-width:0;transform:scaleX(0.9682);transform-origin:0 0;">f1.3.0-v1.10.1RC-latest-1014-g542450b9</div>
<div class="a t" style="left:929.70px;top:1912.05px;font-size:14px;line-height:14px;color:#d1d5db;transform:scaleX(0.9906);transform-origin:0 0;">python: 3.10.11</div>
<div class="a t" style="left:1050.30px;top:1912.05px;font-size:14px;line-height:14px;color:#d1d5db;transform:scaleX(0.9725);transform-origin:0 0;">torch: 2.3.1+cu121</div>
<div class="a t" style="left:1188.70px;top:1912.05px;font-size:14px;line-height:14px;color:#d1d5db;transform:scaleX(0.9871);transform-origin:0 0;">xformers: N/A</div>
<div class="a t" style="left:1298.30px;top:1912.05px;font-size:14px;line-height:14px;color:#d1d5db;transform:scaleX(0.9755);transform-origin:0 0;">gradio: 3.41.2</div>
<div class="a t" style="left:1407.50px;top:1912.05px;font-size:14px;line-height:14px;color:#d1d5db;">checkpoint:</div>
<div class="a t" style="left:1481.50px;top:1912.05px;font-size:14px;line-height:14px;color:#d1d5db;font-weight:bold;-webkit-text-stroke-width:0;">879db523c3</div>
<div class="a" style="left:915.1px;top:1918.0px;width:3px;height:3px;background:#d1d5db;border-radius:1.5px;"></div>
<div class="a" style="left:1035.9px;top:1918.0px;width:3px;height:3px;background:#d1d5db;border-radius:1.5px;"></div>
<div class="a" style="left:1175.1px;top:1918.0px;width:3px;height:3px;background:#d1d5db;border-radius:1.5px;"></div>
<div class="a" style="left:1284.7px;top:1918.0px;width:3px;height:3px;background:#d1d5db;border-radius:1.5px;"></div>
<div class="a" style="left:1392.9px;top:1918.0px;width:3px;height:3px;background:#d1d5db;border-radius:1.5px;"></div>
</body></html>
